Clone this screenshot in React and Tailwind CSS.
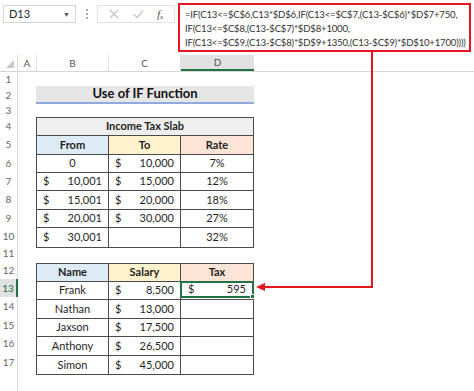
const rowH = {
  1: "h-[14px]", 2: "h-[18px]", 3: "h-[13px]", 4: "h-[18px]", 5: "h-[19px]", 6: "h-[18px]",
  7: "h-[18px]", 8: "h-[19px]", 9: "h-[18px]", 10: "h-[19px]", 11: "h-[15px]", 12: "h-[18px]",
  13: "h-[18px]", 14: "h-[19px]", 15: "h-[18px]", 16: "h-[19px]", 17: "h-[18px]", 18: "h-[20px]",
};

const slabs = [
  { from: null, to: "10,000", rate: "7%" },
  { from: "10,001", to: "15,000", rate: "12%" },
  { from: "15,001", to: "20,000", rate: "18%" },
  { from: "20,001", to: "30,000", rate: "27%" },
  { from: "30,001", to: null, rate: "32%" },
];

const people = [
  { name: "Nathan", salary: "13,000" },
  { name: "Jaxson", salary: "17,500" },
  { name: "Anthony", salary: "26,500" },
  { name: "Simon", salary: "45,000" },
];

const Money = ({ value }) => (
  <div className="flex justify-between px-[6px] w-full">
    <span>$</span>
    <span>{value}</span>
  </div>
);

const Row = ({ n, children, last }) => (
  <div className={`${rowH[n]} flex ${last ? "" : "border-b border-[#4a4a4a]"}`}>{children}</div>
);

const Cell = ({ children, className = "" }) => (
  <div className={`w-[72px] h-full flex items-center justify-center border-r border-[#4a4a4a] ${className}`}>
    {children}
  </div>
);

const LastCell = ({ children, className = "" }) => (
  <div className={`flex-1 h-full flex items-center justify-center ${className}`}>{children}</div>
);

export default function App() {
  return (
    <div
      className="relative w-[474px] h-[391px] bg-white overflow-hidden text-[#1f1f1f]"
      style={{ fontFamily: "Lato, 'Liberation Sans', sans-serif" }}
    >
      {/* formula bar */}
      <div className="h-[55px] flex items-start pt-[5px] pl-[3px]">
        <div className="w-[73px] h-[18px] border border-[#d4d4d4] flex items-center justify-between px-[5px] text-[11px]">
          <span>D13</span>
          <span className="text-[7px] text-[#555]">▼</span>
        </div>
        <div className="w-[21px] h-[18px] flex flex-col items-center justify-center gap-[2px]">
          <span className="w-[2px] h-[2px] bg-[#aaa]" />
          <span className="w-[2px] h-[2px] bg-[#aaa]" />
          <span className="w-[2px] h-[2px] bg-[#aaa]" />
        </div>
        <div className="w-[78px] h-[18px] border border-[#e2e2e2] flex items-center justify-around px-[4px]">
          <svg width="10" height="10" viewBox="0 0 10 10">
            <path d="M1 1L9 9M9 1L1 9" stroke="#c4c4c4" strokeWidth="1.3" />
          </svg>
          <svg width="11" height="10" viewBox="0 0 11 10">
            <path d="M1 5.5L4 8.5L10 1.5" stroke="#c4c4c4" strokeWidth="1.3" fill="none" />
          </svg>
          <span className="text-[10px] italic text-[#444]" style={{ fontFamily: "'Liberation Serif', serif" }}>
            f<sub className="text-[7px]">x</sub>
          </span>
        </div>
        <div className="ml-[3px] -mt-[2px] w-[293px] h-[49px] border-2 border-[#e4151f] pl-[5px] pt-[3px] text-[9.6px] leading-[14px] text-[#333] tracking-[-0.2px] whitespace-nowrap overflow-hidden">
          <div>=IF(C13&lt;=$C$6,C13*$D$6,IF(C13&lt;=$C$7,(C13-$C$6)*$D$7+750,</div>
          <div>IF(C13&lt;=$C$8,(C13-$C$7)*$D$8+1000,</div>
          <div>IF(C13&lt;=$C$9,(C13-$C$8)*$D$9+1350,(C13-$C$9)*$D$10+1700))))</div>
        </div>
      </div>

      {/* column headers */}
      <div className="h-[17px] flex border-b border-[#d6d6d6] text-[10px] text-[#555]">
        <div className="w-[18px] h-full border-r border-[#d6d6d6] flex items-end justify-end p-[3px]">
          <svg width="8" height="8" viewBox="0 0 8 8">
            <path d="M8 0L8 8L0 8Z" fill="#c8c8c8" />
          </svg>
        </div>
        <div className="w-[19px] h-full border-r border-[#e0e0e0] flex items-center justify-center">A</div>
        <div className="w-[72px] h-full border-r border-[#e0e0e0] flex items-center justify-center">B</div>
        <div className="w-[72px] h-full border-r border-[#e0e0e0] flex items-center justify-center">C</div>
        <div className="w-[73px] h-full bg-[#e1e1e1] border-b-2 border-[#217346] flex items-center justify-center">D</div>
        <div className="flex-1" />
      </div>

      <div className="flex">
        {/* row numbers */}
        <div className="w-[18px] border-r border-[#d6d6d6] flex flex-col text-[10px] text-[#666]">
          {Array.from({ length: 18 }, (_, i) => i + 1).map((n) => (
            <div
              key={n}
              className={`${rowH[n]} flex items-center justify-center ${
                n === 13 ? "bg-[#e1e1e1] text-[#217346] -mr-px border-r-2 border-[#217346]" : ""
              }`}
            >
              {n < 18 ? n : ""}
            </div>
          ))}
        </div>

        {/* sheet body */}
        <div className="pl-[18px] flex flex-col text-[11px]">
          <div className={rowH[1]} />
          <div className={`${rowH[2]} w-[218px] bg-[#e7e6e6] border-b-2 border-[#8ea9db] flex items-center justify-center font-bold text-[13px] text-[#111]`}>
            Use of IF Function
          </div>
          <div className={rowH[3]} />

          {/* tax slab table */}
          <div className="w-[218px] border border-[#4a4a4a]">
            <Row n={4}>
              <div className="flex-1 bg-[#efefef] flex items-center justify-center font-bold">Income Tax Slab</div>
            </Row>
            <Row n={5}>
              <Cell className="bg-[#ddebf7] font-bold">From</Cell>
              <Cell className="bg-[#fff2cc] font-bold">To</Cell>
              <LastCell className="bg-[#fce4d6] font-bold">Rate</LastCell>
            </Row>
            {slabs.map((s, i) => (
              <Row key={i} n={6 + i} last={i === slabs.length - 1}>
                <Cell>{s.from ? <Money value={s.from} /> : "0"}</Cell>
                <Cell>{s.to ? <Money value={s.to} /> : null}</Cell>
                <LastCell>{s.rate}</LastCell>
              </Row>
            ))}
          </div>

          <div className={rowH[11]} />

          {/* salary table */}
          <div className="w-[218px] border border-[#4a4a4a]">
            <Row n={12}>
              <Cell className="bg-[#ddebf7] font-bold">Name</Cell>
              <Cell className="bg-[#fff2cc] font-bold">Salary</Cell>
              <LastCell className="bg-[#fce4d6] font-bold">Tax</LastCell>
            </Row>
            <Row n={13}>
              <Cell>Frank</Cell>
              <Cell>
                <Money value="8,500" />
              </Cell>
              <LastCell className="relative -m-px border-2 border-[#217346] h-[calc(100%+2px)]">
                <Money value="595" />
                <span className="absolute -right-[3px] -bottom-[3px] w-[5px] h-[5px] bg-[#217346] border border-white" />
              </LastCell>
            </Row>
            {people.map((p, i) => (
              <Row key={p.name} n={14 + i} last={i === people.length - 1}>
                <Cell>{p.name}</Cell>
                <Cell>
                  <Money value={p.salary} />
                </Cell>
                <LastCell />
              </Row>
            ))}
          </div>
        </div>
      </div>

      {/* red connector arrow */}
      <svg className="absolute left-0 top-0 pointer-events-none" width="474" height="391">
        <path d="M372 51 L372 287 L262 287" stroke="#e4151f" strokeWidth="2" fill="none" />
        <path d="M256 287 L265 283 L265 291 Z" fill="#e4151f" />
      </svg>
    </div>
  );
}
